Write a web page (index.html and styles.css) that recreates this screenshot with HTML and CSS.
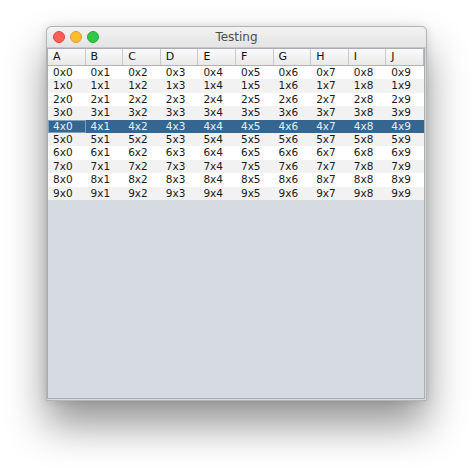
FILE: index.html
```html
<!DOCTYPE html>
<html>
<head>
<meta charset="utf-8">
<link rel="stylesheet" href="styles.css">
</head>
<body>
<div class="window">
  <div class="titlebar">
    <div class="lights">
      <span class="light red"></span>
      <span class="light yellow"></span>
      <span class="light green"></span>
    </div>
    <div class="title">Testing</div>
  </div>
  <div class="content">
    <div class="table" id="table">
      <div class="row head">
        <div class="cell">A</div><div class="cell">B</div><div class="cell">C</div><div class="cell">D</div><div class="cell">E</div><div class="cell">F</div><div class="cell">G</div><div class="cell">H</div><div class="cell">I</div><div class="cell">J</div>
      </div>
      <div class="row"><div class="cell">0x0</div><div class="cell">0x1</div><div class="cell">0x2</div><div class="cell">0x3</div><div class="cell">0x4</div><div class="cell">0x5</div><div class="cell">0x6</div><div class="cell">0x7</div><div class="cell">0x8</div><div class="cell">0x9</div></div>
      <div class="row alt"><div class="cell">1x0</div><div class="cell">1x1</div><div class="cell">1x2</div><div class="cell">1x3</div><div class="cell">1x4</div><div class="cell">1x5</div><div class="cell">1x6</div><div class="cell">1x7</div><div class="cell">1x8</div><div class="cell">1x9</div></div>
      <div class="row"><div class="cell">2x0</div><div class="cell">2x1</div><div class="cell">2x2</div><div class="cell">2x3</div><div class="cell">2x4</div><div class="cell">2x5</div><div class="cell">2x6</div><div class="cell">2x7</div><div class="cell">2x8</div><div class="cell">2x9</div></div>
      <div class="row alt"><div class="cell">3x0</div><div class="cell">3x1</div><div class="cell">3x2</div><div class="cell">3x3</div><div class="cell">3x4</div><div class="cell">3x5</div><div class="cell">3x6</div><div class="cell">3x7</div><div class="cell">3x8</div><div class="cell">3x9</div></div>
      <div class="row sel"><div class="cell focus">4x0</div><div class="cell">4x1</div><div class="cell">4x2</div><div class="cell">4x3</div><div class="cell">4x4</div><div class="cell">4x5</div><div class="cell">4x6</div><div class="cell">4x7</div><div class="cell">4x8</div><div class="cell">4x9</div></div>
      <div class="row alt"><div class="cell">5x0</div><div class="cell">5x1</div><div class="cell">5x2</div><div class="cell">5x3</div><div class="cell">5x4</div><div class="cell">5x5</div><div class="cell">5x6</div><div class="cell">5x7</div><div class="cell">5x8</div><div class="cell">5x9</div></div>
      <div class="row"><div class="cell">6x0</div><div class="cell">6x1</div><div class="cell">6x2</div><div class="cell">6x3</div><div class="cell">6x4</div><div class="cell">6x5</div><div class="cell">6x6</div><div class="cell">6x7</div><div class="cell">6x8</div><div class="cell">6x9</div></div>
      <div class="row alt"><div class="cell">7x0</div><div class="cell">7x1</div><div class="cell">7x2</div><div class="cell">7x3</div><div class="cell">7x4</div><div class="cell">7x5</div><div class="cell">7x6</div><div class="cell">7x7</div><div class="cell">7x8</div><div class="cell">7x9</div></div>
      <div class="row"><div class="cell">8x0</div><div class="cell">8x1</div><div class="cell">8x2</div><div class="cell">8x3</div><div class="cell">8x4</div><div class="cell">8x5</div><div class="cell">8x6</div><div class="cell">8x7</div><div class="cell">8x8</div><div class="cell">8x9</div></div>
      <div class="row alt"><div class="cell">9x0</div><div class="cell">9x1</div><div class="cell">9x2</div><div class="cell">9x3</div><div class="cell">9x4</div><div class="cell">9x5</div><div class="cell">9x6</div><div class="cell">9x7</div><div class="cell">9x8</div><div class="cell">9x9</div></div>
    </div>
  </div>
</div>
</body>
</html>
```

FILE: styles.css
```css
html, body {
  margin: 0;
  padding: 0;
  background: #ffffff;
}
body {
  width: 474px;
  height: 468px;
  overflow: hidden;
  font-family: "DejaVu Sans", "Liberation Sans", sans-serif;
}
.window {
  margin: 26px 0 0 46px;
  width: 381px;
  height: 375px;
  box-sizing: border-box;
  border: 1px solid #b4b4b4;
  border-radius: 5px 5px 0 0;
  background: #d6dae1;
  box-shadow: 0 24px 40px rgba(0, 0, 0, 0.42), 0 0 8px rgba(0, 0, 0, 0.12);
  display: flex;
  flex-direction: column;
}
.titlebar {
  height: 20px;
  flex: none;
  background: linear-gradient(#f2f2f2, #e4e4e4);
  border-bottom: 1px solid #c8c8c8;
  border-radius: 5px 5px 0 0;
  display: flex;
  align-items: center;
  position: relative;
}
.lights {
  display: flex;
  gap: 5px;
  padding-left: 6px;
}
.light {
  width: 12px;
  height: 12px;
  border-radius: 50%;
  box-sizing: border-box;
}
.red { background: #fc5f57; border: 1px solid #de4841; }
.yellow { background: #fdbc2e; border: 1px solid #dea123; }
.green { background: #33c748; border: 1px solid #27aa35; }
.title {
  position: absolute;
  left: 0;
  right: 0;
  text-align: center;
  font-size: 12px;
  color: #4c4c4c;
  top: 3px;
}
.content {
  flex: 1;
  border: 1px solid #a9adb3;
  margin: 0 1px 1px 0;
  background: #d6dae1;
}
.table {
  width: 376px;
  font-size: 10.5px;
  color: #1a1a1a;
}
.row {
  display: flex;
  height: 13.4px;
  line-height: 13.4px;
  background: #ffffff;
}
.row.alt {
  background: #f2f2f2;
}
.row.sel {
  background: #346690;
  color: #e8eef5;
}
.cell {
  width: 37.6px;
  flex: none;
  box-sizing: border-box;
  padding-left: 5px;
  white-space: nowrap;
}
.cell.focus {
  box-shadow: inset 0 0 0 1px #7e9fbd;
}
.row.head {
  height: 16px;
  line-height: 16px;
  background: linear-gradient(#fbfbfb, #e9e9e9);
  border-bottom: 1px solid #b3b3b3;
  color: #111;
  font-size: 11px;
}
.row.head .cell {
  border-right: 1px solid #c9c9c9;
}
.row.head .cell:last-child {
  border-right: 1px solid #b9b9b9;
}
```
